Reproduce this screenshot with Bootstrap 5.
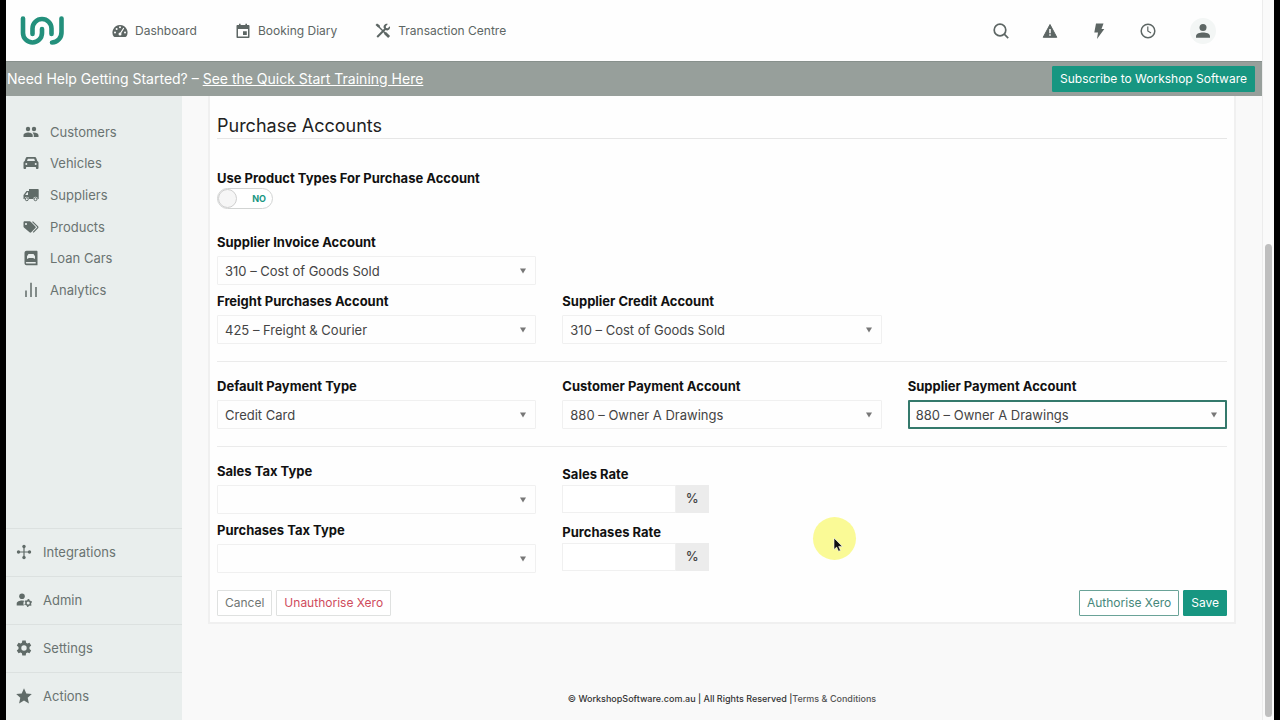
<!DOCTYPE html>
<html lang="en">
<head>
<meta charset="utf-8">
<meta name="viewport" content="width=device-width, initial-scale=1">
<title>Workshop Software - Purchase Accounts</title>
<link rel="stylesheet" href="https://cdn.jsdelivr.net/npm/bootstrap@5.3.0/dist/css/bootstrap.min.css">
<style>
  :root { --ws-green: #179681; --ws-ink: #5d6664; --ws-line: #f0f0f0; }
  body { background: #000; font-family: Inter, "Liberation Sans", sans-serif; font-size: 13px; line-height: 20px; color: #222; }
  .app-frame { margin: 0 6px; min-height: 100vh; background: #f9f9f9; }
  .top-bar { height: 61px; background: #fefefe; padding: 0 46px 0 13px; font-size: 12px; }
  .top-bar a { color: var(--ws-ink); text-decoration: none; }
  .main-links { gap: 38px; margin-left: 47px; }
  .main-links a { gap: 7px; }
  .quick-links { gap: 31px; }
  .quick-links .avatar { width: 26px; height: 26px; border-radius: 50%; background: #f3f6f5; margin-left: 2px; }
  .help-bar { height: 35px; background: #979f9b; border-top: 1px solid #87908c; color: #fff; font-size: 14px; padding: 0 7px 0 1px; }
  .help-bar a { color: #fff; text-decoration: underline; }
  .btn-ws { --bs-btn-padding-x: 7px; --bs-btn-padding-y: 2px; --bs-btn-font-size: 12px; --bs-btn-border-radius: 1px; --bs-btn-line-height: 20px; }
  .btn-solid { --bs-btn-color: #fff; --bs-btn-bg: var(--ws-green); --bs-btn-border-color: var(--ws-green); --bs-btn-hover-color: #fff; --bs-btn-hover-bg: #117a69; }
  .btn-plain { --bs-btn-color: #707674; --bs-btn-bg: #fff; --bs-btn-border-color: #dfe1e0; }
  .btn-warn { --bs-btn-color: #cf4b5c; --bs-btn-bg: #fff; --bs-btn-border-color: #dfe1e0; }
  .btn-line { --bs-btn-color: #46877b; --bs-btn-bg: #fff; --bs-btn-border-color: #6aa398; }
  .side-bar { width: 176px; background: #e9eeed; flex: none; }
  .side-bar a { color: #6a7371; text-decoration: none; display: flex; align-items: center; }
  .side-main { display: grid; grid-template-rows: repeat(6, 1fr); height: 190px; margin-top: 20px; }
  .side-main a { gap: 11px; padding-left: 17px; }
  .side-foot a { gap: 11px; padding: 0 0 2px 10px; height: 48px; border-top: 1px solid #dce1e0; }
  .sheet { background: #fefefe; border: 2px solid var(--ws-line); border-top: 0; margin: 0 26px; padding: 20px 7px 6px; }
  .sheet h1 { font-size: 18px; line-height: 20px; font-weight: 400; margin: 0; padding-bottom: 2px; border-bottom: 1px solid #e6e6e6; }
  .sheet .row { --bs-gutter-x: 26px; }
  .sheet hr { margin: 11px 0 14px; border-color: #d8d8d8; opacity: .5; }
  .field { margin-bottom: 6px; }
  .field label { display: block; font-weight: 700; color: #111; margin-bottom: 4px; }
  .toggle-field { margin: 29px 0 23px; }
  .toggle-field label { margin-bottom: 0; }
  .field .form-select { --bs-form-select-bg-img: url("data:image/svg+xml,%3csvg xmlns='http://www.w3.org/2000/svg' viewBox='0 0 6 6'%3e%3cpath fill='%23777' d='M0 .5h6L3 5.500z'/%3e%3c/svg%3e"); height: 29px; padding: 0 24px 0 7px; font-size: 13px; line-height: 20px; color: #444; background-color: #fefefe; background-size: 6px 6px; background-position: right 9px center; border: 1px solid var(--ws-line); border-radius: 1px; }
  .field .form-select.is-current { border: 2px solid #34796c; padding-left: 6px; background-position: right 8px center; }
  .rate-field { padding-top: 3px; }
  .rate-field label { margin-bottom: 1px; }
  .rate-field .input-group { width: 147px; }
  .rate-field .form-control { height: 28px; border: 1px solid var(--ws-line); border-radius: 0; background: #fff; }
  .rate-field .input-group-text { width: 34px; padding: 0; justify-content: center; background: #ececec; border: 0; border-radius: 0; font-size: 13px; font-weight: 500; color: #444; }
  .yes-no { width: 56px; height: 21px; border: 1px solid #d2d4d3; border-radius: 11px; background: #fff; }
  .yes-no .form-check-input { width: 19px; height: 19px; margin: 0; border: 1px solid #cfcfcf; background: #f6f6f6; border-radius: 50%; flex: none; }
  .yes-no-text { font-size: 9px; line-height: 19px; color: var(--ws-green); font-weight: 700; margin: 0 6px 0 auto; }
  .form-actions { padding-top: 11px; }
  .legal { font-size: 9px; font-weight: 500; padding-bottom: 11px; color: #333; }
  .legal a { color: #555; text-decoration: none; }
  .scroll-track { width: 12px; border-left: 1px solid #ececec; background: #fafafa; padding: 0 2px 3px; flex: none; }
  .scroll-thumb { height: 66%; border-radius: 4px; background: #bfbfbf; margin-top: auto; }
  .pointer-halo { position: absolute; left: 609px; top: 56px; width: 43px; height: 43px; border-radius: 50%; background: #fafa96; }
  .pointer-halo svg { position: absolute; left: 20px; top: 20px; }
</style>
</head>
<body>
<div class="app-frame d-flex">
  <div class="flex-grow-1 d-flex flex-column">
    <header class="top-bar d-flex align-items-center">
      <a href="#" aria-label="Workshop Software home">
        <svg class="d-block" width="46" height="32" viewBox="0 0 46 32" fill="none" stroke="#23907c" stroke-width="4.600" stroke-linecap="round"><path d="M4 3.500v14.500a9.500 9.500 0 0 0 19 0v-4M13.500 19v-5.500a9.500 9.500 0 0 1 19 0V19M42.500 3.500V17a10 10 0 0 1-9.500 10.500"/></svg>
      </a>
      <nav class="main-links d-flex">
        <a href="#" class="d-flex align-items-center">
          <svg width="16" height="16" viewBox="0 0 16 16"><path fill="#5d6664" d="M8 2a7.500 7.500 0 0 0-6.300 11.600c.2.300.5.400.8.400h11c.3 0 .6-.1.800-.4A7.500 7.500 0 0 0 8 2z"/><g fill="#fefefe"><circle cx="3" cy="9.500" r="1"/><circle cx="4.600" cy="5.900" r="1"/><circle cx="8" cy="4.300" r="1"/><circle cx="13" cy="9.500" r="1"/><circle cx="8" cy="11" r="1.500"/></g><path d="M8 11l3.500-5.500" stroke="#fefefe" stroke-width="1.200" stroke-linecap="round"/></svg>
          Dashboard</a>
        <a href="#" class="d-flex align-items-center">
          <svg width="16" height="16" viewBox="0 0 16 16"><path fill="#5d6664" fill-rule="evenodd" d="M4 .8h1.600V2h4.800V.8H12V2h1.500c.6 0 1 .4 1 1v11c0 .6-.4 1-1 1h-11c-.6 0-1-.4-1-1V3c0-.6.4-1 1-1H4zM3 6v7.500h10V6zM8 8.300h3.800V12H8z"/></svg>
          Booking Diary</a>
        <a href="#" class="d-flex align-items-center">
          <svg width="16" height="16" viewBox="0 0 16 16" fill="none" stroke="#5d6664"><path stroke-width="2" d="M2.200 14L10.500 5.800"/><path stroke-width="2.800" d="M9.800 9.800l4.300 4.200"/><path stroke-width="1.400" d="M3 3l7 7"/><path fill="#5d6664" stroke="none" d="M.5 2L2 .5l2.700 1.700.2 2-2 .1zM14.900 3.200l-2.200 2-1.700-.2-.2-1.700 2-2.300C10.500.3 8 2.500 8.700 5L11 7.300c2.500.7 4.700-1.700 3.900-4.100z"/></svg>
          Transaction Centre</a>
      </nav>
      <div class="quick-links d-flex align-items-center ms-auto">
        <a href="#" aria-label="Search"><svg class="d-block" width="18" height="18" viewBox="0 0 18 18" fill="none" stroke="#5d6664" stroke-width="1.700"><circle cx="8" cy="8" r="5.800"/><path d="M12.200 12.200l4 4"/></svg></a>
        <a href="#" aria-label="Alerts"><svg class="d-block" width="18" height="18" viewBox="0 0 18 18"><path fill="#5d6664" stroke="#5d6664" stroke-linejoin="round" d="M9 2.500l6.800 12.800H2.200z"/><path stroke="#fff" stroke-width="1.500" d="M9 7v4.300M9 12.300v1.500"/></svg></a>
        <a href="#" aria-label="Quick actions"><svg class="d-block" width="18" height="18" viewBox="0 0 18 18"><path fill="#5d6664" d="M6 1.500h7.500L11.500 7h2.800L7 17l1-6.500H4.300z"/></svg></a>
        <a href="#" aria-label="History"><svg class="d-block" width="18" height="18" viewBox="0 0 18 18" fill="none" stroke="#5d6664" stroke-width="1.500"><circle cx="9" cy="9" r="6.800"/><path stroke-width="1.200" d="M8.800 4.500V9l3.200 2"/></svg></a>
        <a href="#" aria-label="Account" class="avatar d-flex align-items-center justify-content-center"><svg width="16" height="16" viewBox="0 0 16 16" fill="#5d6664"><circle cx="8" cy="4.500" r="3.500"/><path d="M1 14.800v-1.500C1 10.500 5 9.500 8 9.500s7 1 7 3.800v1.500z"/></svg></a>
      </div>
    </header>

    <div class="help-bar d-flex align-items-center justify-content-between">
      <div>Need Help Getting Started? – <a href="#">See the Quick Start Training Here</a></div>
      <button type="button" class="btn btn-ws btn-solid">Subscribe to Workshop Software</button>
    </div>

    <div class="d-flex flex-grow-1">
      <nav class="side-bar d-flex flex-column">
        <div class="side-main">
          <a href="#"><svg width="16" height="16" viewBox="0 0 16 16" fill="#606b68"><circle cx="5" cy="5" r="2.200"/><circle cx="11" cy="5" r="2.200"/><path d="M.5 13v-1.700C.5 9.300 3.500 8.500 5.200 8.500s4.500.8 4.500 2.800V13zM10.800 13v-1.700c0-1-.5-1.900-1.300-2.600 2-.5 6 .2 6 2.600V13z"/></svg>Customers</a>
          <a href="#"><svg width="16" height="16" viewBox="0 0 16 16"><path fill="#606b68" fill-rule="evenodd" d="M4.500 2h7c.9 0 1.500.5 1.800 1.300L14.300 6c.8.300 1.200.9 1.200 1.600V13c0 .6-.3 1-.9 1h-.8c-.6 0-.9-.4-.9-1v-1H3.100v1c0 .6-.3 1-.9 1h-.8c-.6 0-.9-.4-.9-1V7.600c0-.7.4-1.300 1.200-1.600l1-2.700C3 2.500 3.600 2 4.500 2zm.3 1.700L4 6h8l-.8-2.300zM3.300 8.100a1 1 0 1 0 0 2 1 1 0 0 0 0-2zm9.400 0a1 1 0 1 0 0 2 1 1 0 0 0 0-2z"/></svg>Vehicles</a>
          <a href="#"><svg width="16" height="16" viewBox="0 0 16 16"><path fill="#606b68" fill-rule="evenodd" d="M6 2h9c.4 0 .7.300.7.700v9.300h-1a2.200 2.200 0 0 0-4.400 0H6a2.200 2.200 0 0 0-4.400 0H.5V8l3-4H6zM4.200 5.300L2.200 8H5V5.300z"/><circle cx="3.800" cy="12.200" r="1.500" fill="none" stroke="#606b68"/><circle cx="12.500" cy="12.200" r="1.500" fill="none" stroke="#606b68"/></svg>Suppliers</a>
          <a href="#"><svg width="16" height="16" viewBox="0 0 16 16"><path fill="#606b68" fill-rule="evenodd" d="M.5 3.500c0-.7.500-1.200 1.200-1.200h5c.4 0 .8.200 1 .4l4.700 4.700c.5.500.5 1.200 0 1.700L8.200 13.300c-.5.500-1.200.5-1.700 0L.9 8.500a1.200 1.200 0 0 1-.4-.9zM3 3.900a1.100 1.100 0 1 0 0 2.200 1.100 1.100 0 0 0 0-2.200z"/><path fill="none" stroke="#606b68" stroke-width="1.200" d="M9.500 2.600l5.100 5.100c.4.400.4.800 0 1.200l-4.400 4.400"/></svg>Products</a>
          <a href="#"><svg width="16" height="16" viewBox="0 0 16 16"><path fill="#606b68" fill-rule="evenodd" d="M3.500.7h10c.6 0 1 .4 1 1V15.300h-11c-1 0-2-.8-2-2V2.700c0-1.100 1-2 2-2zm0 11.300c-.9 0-.9 1.500 0 1.500h9.200V12zM5.500 4L4 6.200v2.600h1.300V8h5.400v.8H12V6.200L10.500 4z"/></svg>Loan Cars</a>
          <a href="#"><svg width="16" height="16" viewBox="0 0 16 16" stroke="#606b68" stroke-width="1.500"><path d="M3 15V8.500M8 15V.8M13 15V5"/></svg>Analytics</a>
        </div>
        <div class="side-foot mt-auto">
          <a href="#"><svg width="16" height="16" viewBox="0 0 16 16" fill="#606b68"><path stroke="#606b68" stroke-width="1.200" d="M8 3v10M3 8h10"/><circle cx="8" cy="2.500" r="1.700"/><circle cx="8" cy="13.500" r="1.700"/><circle cx="2.500" cy="8" r="1.700"/><circle cx="13.500" cy="8" r="1.700"/></svg>Integrations</a>
          <a href="#"><svg width="16" height="16" viewBox="0 0 16 16" fill="#606b68"><circle cx="6" cy="4.300" r="2.800"/><path d="M.7 13.500v-2C.7 9.500 3.500 8.500 6 8.500l2.200.2c-1 1.500-1 3.300-.2 4.800z"/><circle cx="12.200" cy="11" r="2.300" fill="none" stroke="#606b68" stroke-width="1.500"/><path fill="none" stroke="#606b68" stroke-width="1.300" stroke-dasharray="1.200 2" d="M12.200 7.700a3.300 3.300 0 1 1-.1 0z"/></svg>Admin</a>
          <a href="#"><svg width="16" height="16" viewBox="0 0 16 16"><path fill="#606b68" fill-rule="evenodd" d="M6.300.5h3.400l.4 2.200 1.300.8 2.100-.8 1.700 2.900-1.700 1.500v1.800l1.700 1.500-1.700 2.900-2.100-.8-1.300.8-.4 2.200H6.300l-.4-2.200-1.300-.8-2.100.8-1.700-2.900 1.700-1.500V7.100L.8 5.600l1.700-2.900 2.100.8 1.300-.8zM8 5.300a2.700 2.700 0 1 0 0 5.400 2.700 2.700 0 0 0 0-5.400z"/></svg>Settings</a>
          <a href="#"><svg width="16" height="16" viewBox="0 0 16 16"><path fill="#606b68" d="M8 .3l2.300 5.100 5.500.6-4.100 3.800 1.200 5.600L8 12.600l-4.900 2.800 1.200-5.600L.2 6l5.500-.6z"/></svg>Actions</a>
        </div>
      </nav>

      <main class="flex-grow-1 d-flex flex-column">
        <form class="sheet" onsubmit="return false">
          <h1>Purchase Accounts</h1>
          <div class="field toggle-field">
            <label class="mb-0" for="useTypes">Use Product Types For Purchase Account</label>
            <div class="yes-no d-flex align-items-center">
              <input class="form-check-input" type="checkbox" id="useTypes">
              <span class="yes-no-text">NO</span>
            </div>
          </div>
          <div class="row">
            <div class="col-4 field">
              <label for="supplierInvoice">Supplier Invoice Account</label>
              <select class="form-select" id="supplierInvoice"><option>310 – Cost of Goods Sold</option></select>
            </div>
          </div>
          <div class="row">
            <div class="col-4 field">
              <label for="freight">Freight Purchases Account</label>
              <select class="form-select" id="freight"><option>425 – Freight &amp; Courier</option></select>
            </div>
            <div class="col-4 field">
              <label for="supplierCredit">Supplier Credit Account</label>
              <select class="form-select" id="supplierCredit"><option>310 – Cost of Goods Sold</option></select>
            </div>
          </div>
          <hr>
          <div class="row">
            <div class="col-4 field">
              <label for="paymentType">Default Payment Type</label>
              <select class="form-select" id="paymentType"><option>Credit Card</option></select>
            </div>
            <div class="col-4 field">
              <label for="customerPayment">Customer Payment Account</label>
              <select class="form-select" id="customerPayment"><option>880 – Owner A Drawings</option></select>
            </div>
            <div class="col-4 field">
              <label for="supplierPayment">Supplier Payment Account</label>
              <select class="form-select is-current" id="supplierPayment"><option>880 – Owner A Drawings</option></select>
            </div>
          </div>
          <hr>
          <div class="row position-relative">
            <div class="col-4">
              <div class="field">
                <label for="salesTax">Sales Tax Type</label>
                <select class="form-select" id="salesTax"><option></option></select>
              </div>
              <div class="field">
                <label for="purchaseTax">Purchases Tax Type</label>
                <select class="form-select" id="purchaseTax"><option></option></select>
              </div>
            </div>
            <div class="col-4">
              <div class="field rate-field">
                <label for="salesRate">Sales Rate</label>
                <div class="input-group"><input type="text" class="form-control" id="salesRate"><span class="input-group-text">%</span></div>
              </div>
              <div class="field rate-field">
                <label for="purchaseRate">Purchases Rate</label>
                <div class="input-group"><input type="text" class="form-control" id="purchaseRate"><span class="input-group-text">%</span></div>
              </div>
            </div>
            <div class="pointer-halo p-0" aria-hidden="true">
              <svg width="12" height="16" viewBox="0 0 12 16"><path d="M1 1v11.500l2.700-2.400 1.800 4.200 2-.9-1.800-4h3.600z" fill="#111" stroke="#fff" stroke-width=".6"/></svg>
            </div>
          </div>
          <div class="form-actions d-flex gap-1">
            <button type="button" class="btn btn-ws btn-plain">Cancel</button>
            <button type="button" class="btn btn-ws btn-warn">Unauthorise Xero</button>
            <button type="button" class="btn btn-ws btn-line ms-auto">Authorise Xero</button>
            <button type="submit" class="btn btn-ws btn-solid">Save</button>
          </div>
        </form>
        <footer class="legal text-center mt-auto">© WorkshopSoftware.com.au | All Rights Reserved |<a href="#">Terms &amp; Conditions</a></footer>
      </main>
    </div>
  </div>
  <div class="scroll-track d-flex flex-column" aria-hidden="true"><div class="scroll-thumb"></div></div>
</div>
<script src="https://cdn.jsdelivr.net/npm/bootstrap@5.3.0/dist/js/bootstrap.bundle.min.js"></script>
</body>
</html>
